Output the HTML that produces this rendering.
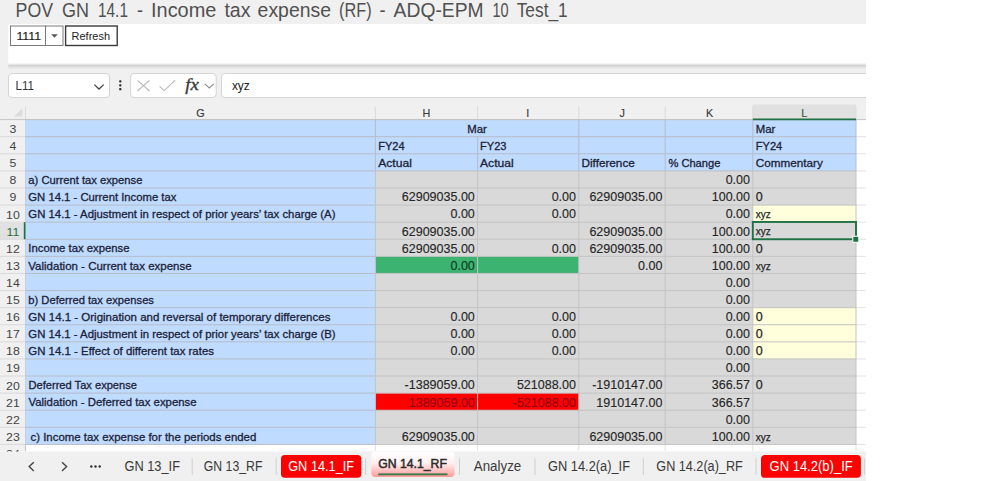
<!DOCTYPE html>
<html lang="en"><head><meta charset="utf-8"><title>POV GN 14.1 - Income tax expense (RF)</title>
<style>
html,body{margin:0;padding:0;background:#fff;overflow:hidden}
svg{display:block;font-family:"Liberation Sans",sans-serif}
text{white-space:pre}
</style></head><body>
<svg width="1000" height="481" viewBox="0 0 1000 481">
<rect x="0.00" y="0.00" width="1000.00" height="481.00" fill="#ffffff" />
<clipPath id="cl"><rect x="0" y="0" width="866" height="481"/></clipPath><g clip-path="url(#cl)">
<rect x="0.00" y="0.00" width="866.00" height="24.00" fill="#f0f0f0" />
<text x="15.60" y="16.80" font-size="19.3" fill="#505050" text-anchor="start" textLength="37.43" lengthAdjust="spacingAndGlyphs" >POV</text>
<text x="62.00" y="16.80" font-size="19.3" fill="#505050" text-anchor="start" textLength="27.00" lengthAdjust="spacingAndGlyphs" >GN</text>
<text x="98.00" y="16.80" font-size="19.3" fill="#505050" text-anchor="start" textLength="29.94" lengthAdjust="spacingAndGlyphs" >14.1</text>
<text x="137.00" y="16.80" font-size="19.3" fill="#505050" text-anchor="start" textLength="6.05" lengthAdjust="spacingAndGlyphs" >-</text>
<text x="151.00" y="16.80" font-size="19.3" fill="#505050" text-anchor="start" textLength="65.38" lengthAdjust="spacingAndGlyphs" >Income</text>
<text x="224.40" y="16.80" font-size="19.3" fill="#505050" text-anchor="start" textLength="26.08" lengthAdjust="spacingAndGlyphs" >tax</text>
<text x="257.60" y="16.80" font-size="19.3" fill="#505050" text-anchor="start" textLength="73.41" lengthAdjust="spacingAndGlyphs" >expense</text>
<text x="339.00" y="16.80" font-size="19.3" fill="#505050" text-anchor="start" textLength="32.58" lengthAdjust="spacingAndGlyphs" >(RF)</text>
<text x="379.60" y="16.80" font-size="19.3" fill="#505050" text-anchor="start" textLength="6.05" lengthAdjust="spacingAndGlyphs" >-</text>
<text x="393.60" y="16.80" font-size="19.3" fill="#505050" text-anchor="start" textLength="90.04" lengthAdjust="spacingAndGlyphs" >ADQ-EPM</text>
<text x="492.50" y="16.80" font-size="19.3" fill="#505050" text-anchor="start" textLength="16.13" lengthAdjust="spacingAndGlyphs" >10</text>
<text x="516.70" y="16.80" font-size="19.3" fill="#505050" text-anchor="start" textLength="51.03" lengthAdjust="spacingAndGlyphs" >Test_1</text>
<rect x="0.00" y="24.00" width="8.30" height="60.00" fill="#f0f0f0" />
<defs><linearGradient id="sh" x1="0" y1="0" x2="0" y2="1"><stop offset="0" stop-color="#ffffff"/><stop offset="0.22" stop-color="#eeeeee"/><stop offset="0.43" stop-color="#d2d2d2"/><stop offset="0.6" stop-color="#dedede"/><stop offset="0.8" stop-color="#e9e9e9"/><stop offset="1" stop-color="#f0f0f0"/></linearGradient><linearGradient id="act" x1="0" y1="0" x2="0" y2="1"><stop offset="0" stop-color="#ffffff"/><stop offset="0.45" stop-color="#fff0f0"/><stop offset="1" stop-color="#ff9a9a"/></linearGradient></defs>
<rect x="0.00" y="64.00" width="866.00" height="10.00" fill="#f0f0f0" />
<rect x="8.30" y="62.50" width="857.70" height="7.00" fill="url(#sh)" />
<rect x="0.00" y="73.00" width="866.00" height="26.00" fill="#f0f0f0" />
<rect x="8.5" y="73.5" width="101" height="24" rx="3.5" fill="#fff" stroke="#d4d4d4" stroke-width="1"/>
<text x="15.60" y="90.20" font-size="13.2" fill="#333" text-anchor="start" textLength="18.40" lengthAdjust="spacingAndGlyphs" >L11</text>
<path d="M94.3 84.6 L99 89 L103.7 84.6" fill="none" stroke="#444" stroke-width="1.3"/>
<rect x="119.2" y="80.20" width="2.2" height="2.2" rx="0.6" fill="#2e2e2e"/>
<rect x="119.2" y="84.20" width="2.2" height="2.2" rx="0.6" fill="#2e2e2e"/>
<rect x="119.2" y="88.10" width="2.2" height="2.2" rx="0.6" fill="#2e2e2e"/>
<rect x="130.6" y="73.5" width="85.6" height="24" rx="3.5" fill="#fff" stroke="#d4d4d4" stroke-width="1"/>
<path d="M137.5 80.3 L149.5 91 M149.5 80.3 L137.5 91" fill="none" stroke="#b8b8b8" stroke-width="1.1"/>
<path d="M159.6 86.3 L164.3 90.6 L175.2 80.2" fill="none" stroke="#b8b8b8" stroke-width="1.1"/>
<text x="185.20" y="89.60" font-size="16.5" fill="#3a3a3a" text-anchor="start" textLength="13.60" lengthAdjust="spacingAndGlyphs" font-family='"Liberation Serif", serif' font-style="italic" stroke="#3a3a3a" stroke-width="0.35">fx</text>
<path d="M204.8 83.9 L209.3 88 L213.8 83.9" fill="none" stroke="#8c8c8c" stroke-width="1.1"/>
<rect x="221.5" y="73.5" width="650.5" height="24" rx="3.5" fill="#fff" stroke="#d4d4d4" stroke-width="1"/>
<text x="231.90" y="90.00" font-size="13" fill="#222" text-anchor="start" textLength="17.90" lengthAdjust="spacingAndGlyphs" >xyz</text>
<rect x="0.00" y="98.00" width="866.00" height="21.60" fill="#f0f0f0" />
<rect x="752.80" y="104.40" width="103.20" height="15.20" fill="#e1e1e1" />
<line x1="375.40" y1="106.50" x2="375.40" y2="119.60" stroke="#dadada" stroke-width="1" />
<line x1="477.60" y1="106.50" x2="477.60" y2="119.60" stroke="#dadada" stroke-width="1" />
<line x1="578.80" y1="106.50" x2="578.80" y2="119.60" stroke="#dadada" stroke-width="1" />
<line x1="665.20" y1="106.50" x2="665.20" y2="119.60" stroke="#dadada" stroke-width="1" />
<line x1="752.80" y1="106.50" x2="752.80" y2="119.60" stroke="#dadada" stroke-width="1" />
<line x1="25.50" y1="106.50" x2="25.50" y2="119.60" stroke="#dadada" stroke-width="1" />
<line x1="856.00" y1="106.50" x2="856.00" y2="119.60" stroke="#dadada" stroke-width="1" />
<text x="200.50" y="116.70" font-size="10.8" fill="#3a3a3a" text-anchor="middle" stroke="#3a3a3a" stroke-width="0.15">G</text>
<text x="426.50" y="116.70" font-size="10.8" fill="#3a3a3a" text-anchor="middle" stroke="#3a3a3a" stroke-width="0.15">H</text>
<text x="527.80" y="116.70" font-size="10.8" fill="#3a3a3a" text-anchor="middle" stroke="#3a3a3a" stroke-width="0.15">I</text>
<text x="622.30" y="116.70" font-size="10.8" fill="#3a3a3a" text-anchor="middle" stroke="#3a3a3a" stroke-width="0.15">J</text>
<text x="709.50" y="116.70" font-size="10.8" fill="#3a3a3a" text-anchor="middle" stroke="#3a3a3a" stroke-width="0.15">K</text>
<text x="804.30" y="116.70" font-size="10.8" fill="#2c5a3c" text-anchor="middle" stroke="#2c5a3c" stroke-width="0.15">L</text>
<path d="M22.3 108.2 L22.3 116.5 L13.8 116.5 Z" fill="#dcdcdc"/>
<rect x="0.00" y="119.60" width="25.50" height="331.40" fill="#f0f0f0" />
<line x1="0.00" y1="136.69" x2="25.50" y2="136.69" stroke="#d9d9d9" stroke-width="1" />
<text x="12.90" y="133.09" font-size="11.2" fill="#444" text-anchor="middle" textLength="6.84" lengthAdjust="spacingAndGlyphs" >3</text>
<line x1="0.00" y1="153.79" x2="25.50" y2="153.79" stroke="#d9d9d9" stroke-width="1" />
<text x="12.90" y="150.19" font-size="11.2" fill="#444" text-anchor="middle" textLength="6.84" lengthAdjust="spacingAndGlyphs" >4</text>
<line x1="0.00" y1="170.88" x2="25.50" y2="170.88" stroke="#d9d9d9" stroke-width="1" />
<text x="12.90" y="167.28" font-size="11.2" fill="#444" text-anchor="middle" textLength="6.84" lengthAdjust="spacingAndGlyphs" >5</text>
<line x1="0.00" y1="187.98" x2="25.50" y2="187.98" stroke="#d9d9d9" stroke-width="1" />
<text x="12.90" y="184.38" font-size="11.2" fill="#444" text-anchor="middle" textLength="6.84" lengthAdjust="spacingAndGlyphs" >8</text>
<line x1="0.00" y1="205.07" x2="25.50" y2="205.07" stroke="#d9d9d9" stroke-width="1" />
<text x="12.90" y="201.47" font-size="11.2" fill="#444" text-anchor="middle" textLength="6.84" lengthAdjust="spacingAndGlyphs" >9</text>
<line x1="0.00" y1="222.17" x2="25.50" y2="222.17" stroke="#d9d9d9" stroke-width="1" />
<text x="12.90" y="218.57" font-size="11.2" fill="#444" text-anchor="middle" textLength="13.68" lengthAdjust="spacingAndGlyphs" >10</text>
<rect x="0.00" y="222.17" width="25.50" height="17.09" fill="#e1e1e1" />
<line x1="0.00" y1="239.26" x2="25.50" y2="239.26" stroke="#d9d9d9" stroke-width="1" />
<text x="12.90" y="235.66" font-size="11.2" fill="#1f6e43" text-anchor="middle" textLength="12.77" lengthAdjust="spacingAndGlyphs" >11</text>
<line x1="0.00" y1="256.36" x2="25.50" y2="256.36" stroke="#d9d9d9" stroke-width="1" />
<text x="12.90" y="252.76" font-size="11.2" fill="#444" text-anchor="middle" textLength="13.68" lengthAdjust="spacingAndGlyphs" >12</text>
<line x1="0.00" y1="273.46" x2="25.50" y2="273.46" stroke="#d9d9d9" stroke-width="1" />
<text x="12.90" y="269.86" font-size="11.2" fill="#444" text-anchor="middle" textLength="13.68" lengthAdjust="spacingAndGlyphs" >13</text>
<line x1="0.00" y1="290.55" x2="25.50" y2="290.55" stroke="#d9d9d9" stroke-width="1" />
<text x="12.90" y="286.95" font-size="11.2" fill="#444" text-anchor="middle" textLength="13.68" lengthAdjust="spacingAndGlyphs" >14</text>
<line x1="0.00" y1="307.64" x2="25.50" y2="307.64" stroke="#d9d9d9" stroke-width="1" />
<text x="12.90" y="304.04" font-size="11.2" fill="#444" text-anchor="middle" textLength="13.68" lengthAdjust="spacingAndGlyphs" >15</text>
<line x1="0.00" y1="324.74" x2="25.50" y2="324.74" stroke="#d9d9d9" stroke-width="1" />
<text x="12.90" y="321.14" font-size="11.2" fill="#444" text-anchor="middle" textLength="13.68" lengthAdjust="spacingAndGlyphs" >16</text>
<line x1="0.00" y1="341.84" x2="25.50" y2="341.84" stroke="#d9d9d9" stroke-width="1" />
<text x="12.90" y="338.24" font-size="11.2" fill="#444" text-anchor="middle" textLength="13.68" lengthAdjust="spacingAndGlyphs" >17</text>
<line x1="0.00" y1="358.93" x2="25.50" y2="358.93" stroke="#d9d9d9" stroke-width="1" />
<text x="12.90" y="355.33" font-size="11.2" fill="#444" text-anchor="middle" textLength="13.68" lengthAdjust="spacingAndGlyphs" >18</text>
<line x1="0.00" y1="376.02" x2="25.50" y2="376.02" stroke="#d9d9d9" stroke-width="1" />
<text x="12.90" y="372.42" font-size="11.2" fill="#444" text-anchor="middle" textLength="13.68" lengthAdjust="spacingAndGlyphs" >19</text>
<line x1="0.00" y1="393.12" x2="25.50" y2="393.12" stroke="#d9d9d9" stroke-width="1" />
<text x="12.90" y="389.52" font-size="11.2" fill="#444" text-anchor="middle" textLength="13.68" lengthAdjust="spacingAndGlyphs" >20</text>
<line x1="0.00" y1="410.22" x2="25.50" y2="410.22" stroke="#d9d9d9" stroke-width="1" />
<text x="12.90" y="406.62" font-size="11.2" fill="#444" text-anchor="middle" textLength="13.68" lengthAdjust="spacingAndGlyphs" >21</text>
<line x1="0.00" y1="427.31" x2="25.50" y2="427.31" stroke="#d9d9d9" stroke-width="1" />
<text x="12.90" y="423.71" font-size="11.2" fill="#444" text-anchor="middle" textLength="13.68" lengthAdjust="spacingAndGlyphs" >22</text>
<line x1="0.00" y1="444.40" x2="25.50" y2="444.40" stroke="#d9d9d9" stroke-width="1" />
<text x="12.90" y="440.80" font-size="11.2" fill="#444" text-anchor="middle" textLength="13.68" lengthAdjust="spacingAndGlyphs" >23</text>
<text x="12.90" y="457.90" font-size="11.2" fill="#444" text-anchor="middle" textLength="13.68" lengthAdjust="spacingAndGlyphs" >24</text>
<line x1="25.50" y1="119.60" x2="25.50" y2="451.00" stroke="#c4c4c4" stroke-width="1" />
<rect x="23.80" y="222.17" width="2.20" height="17.09" fill="#1f7145" />
<rect x="25.50" y="119.60" width="830.50" height="51.28" fill="#bfdbff" />
<rect x="25.50" y="119.60" width="349.90" height="324.80" fill="#bfdbff" />
<rect x="375.40" y="170.88" width="480.60" height="273.52" fill="#d9d9d9" />
<rect x="752.80" y="205.07" width="103.20" height="17.09" fill="#ffffdc" />
<rect x="752.80" y="307.64" width="103.20" height="17.09" fill="#ffffdc" />
<rect x="752.80" y="324.74" width="103.20" height="17.09" fill="#ffffdc" />
<rect x="752.80" y="341.83" width="103.20" height="17.09" fill="#ffffdc" />
<rect x="375.40" y="256.36" width="203.40" height="17.09" fill="#3cb371" />
<rect x="375.40" y="393.12" width="203.40" height="17.09" fill="#ff0000" />
<line x1="856.00" y1="119.60" x2="866.00" y2="119.60" stroke="#e2e2e2" stroke-width="1" />
<line x1="856.00" y1="136.69" x2="866.00" y2="136.69" stroke="#e2e2e2" stroke-width="1" />
<line x1="856.00" y1="153.79" x2="866.00" y2="153.79" stroke="#e2e2e2" stroke-width="1" />
<line x1="856.00" y1="170.88" x2="866.00" y2="170.88" stroke="#e2e2e2" stroke-width="1" />
<line x1="856.00" y1="187.98" x2="866.00" y2="187.98" stroke="#e2e2e2" stroke-width="1" />
<line x1="856.00" y1="205.07" x2="866.00" y2="205.07" stroke="#e2e2e2" stroke-width="1" />
<line x1="856.00" y1="222.17" x2="866.00" y2="222.17" stroke="#e2e2e2" stroke-width="1" />
<line x1="856.00" y1="239.26" x2="866.00" y2="239.26" stroke="#e2e2e2" stroke-width="1" />
<line x1="856.00" y1="256.36" x2="866.00" y2="256.36" stroke="#e2e2e2" stroke-width="1" />
<line x1="856.00" y1="273.45" x2="866.00" y2="273.45" stroke="#e2e2e2" stroke-width="1" />
<line x1="856.00" y1="290.55" x2="866.00" y2="290.55" stroke="#e2e2e2" stroke-width="1" />
<line x1="856.00" y1="307.64" x2="866.00" y2="307.64" stroke="#e2e2e2" stroke-width="1" />
<line x1="856.00" y1="324.74" x2="866.00" y2="324.74" stroke="#e2e2e2" stroke-width="1" />
<line x1="856.00" y1="341.83" x2="866.00" y2="341.83" stroke="#e2e2e2" stroke-width="1" />
<line x1="856.00" y1="358.93" x2="866.00" y2="358.93" stroke="#e2e2e2" stroke-width="1" />
<line x1="856.00" y1="376.02" x2="866.00" y2="376.02" stroke="#e2e2e2" stroke-width="1" />
<line x1="856.00" y1="393.12" x2="866.00" y2="393.12" stroke="#e2e2e2" stroke-width="1" />
<line x1="856.00" y1="410.22" x2="866.00" y2="410.22" stroke="#e2e2e2" stroke-width="1" />
<line x1="856.00" y1="427.31" x2="866.00" y2="427.31" stroke="#e2e2e2" stroke-width="1" />
<line x1="856.00" y1="444.40" x2="866.00" y2="444.40" stroke="#e2e2e2" stroke-width="1" />
<line x1="856.00" y1="461.50" x2="866.00" y2="461.50" stroke="#e2e2e2" stroke-width="1" />
<line x1="375.40" y1="444.40" x2="375.40" y2="451.00" stroke="#e2e2e2" stroke-width="1" />
<line x1="477.60" y1="444.40" x2="477.60" y2="451.00" stroke="#e2e2e2" stroke-width="1" />
<line x1="578.80" y1="444.40" x2="578.80" y2="451.00" stroke="#e2e2e2" stroke-width="1" />
<line x1="665.20" y1="444.40" x2="665.20" y2="451.00" stroke="#e2e2e2" stroke-width="1" />
<line x1="752.80" y1="444.40" x2="752.80" y2="451.00" stroke="#e2e2e2" stroke-width="1" />
<line x1="856.00" y1="444.40" x2="856.00" y2="451.00" stroke="#e2e2e2" stroke-width="1" />
<line x1="25.50" y1="119.60" x2="375.40" y2="119.60" stroke="#b7bcc7" stroke-width="1" />
<line x1="375.40" y1="119.60" x2="856.00" y2="119.60" stroke="#b7bcc7" stroke-width="1" />
<line x1="25.50" y1="136.69" x2="375.40" y2="136.69" stroke="#b7bcc7" stroke-width="1" />
<line x1="375.40" y1="136.69" x2="856.00" y2="136.69" stroke="#b7bcc7" stroke-width="1" />
<line x1="25.50" y1="153.79" x2="375.40" y2="153.79" stroke="#b7bcc7" stroke-width="1" />
<line x1="375.40" y1="153.79" x2="856.00" y2="153.79" stroke="#b7bcc7" stroke-width="1" />
<line x1="25.50" y1="170.88" x2="375.40" y2="170.88" stroke="#b7bcc7" stroke-width="1" />
<line x1="375.40" y1="170.88" x2="856.00" y2="170.88" stroke="#b7bcc7" stroke-width="1" />
<line x1="25.50" y1="187.98" x2="375.40" y2="187.98" stroke="#b7bcc7" stroke-width="1" />
<line x1="375.40" y1="187.98" x2="856.00" y2="187.98" stroke="#c3c3c3" stroke-width="1" />
<line x1="25.50" y1="205.07" x2="375.40" y2="205.07" stroke="#b7bcc7" stroke-width="1" />
<line x1="375.40" y1="205.07" x2="856.00" y2="205.07" stroke="#c3c3c3" stroke-width="1" />
<line x1="25.50" y1="222.17" x2="375.40" y2="222.17" stroke="#b7bcc7" stroke-width="1" />
<line x1="375.40" y1="222.17" x2="856.00" y2="222.17" stroke="#c3c3c3" stroke-width="1" />
<line x1="25.50" y1="239.26" x2="375.40" y2="239.26" stroke="#b7bcc7" stroke-width="1" />
<line x1="375.40" y1="239.26" x2="856.00" y2="239.26" stroke="#c3c3c3" stroke-width="1" />
<line x1="25.50" y1="256.36" x2="375.40" y2="256.36" stroke="#b7bcc7" stroke-width="1" />
<line x1="375.40" y1="256.36" x2="856.00" y2="256.36" stroke="#c3c3c3" stroke-width="1" />
<line x1="25.50" y1="273.45" x2="375.40" y2="273.45" stroke="#b7bcc7" stroke-width="1" />
<line x1="375.40" y1="273.45" x2="856.00" y2="273.45" stroke="#c3c3c3" stroke-width="1" />
<line x1="25.50" y1="290.55" x2="375.40" y2="290.55" stroke="#b7bcc7" stroke-width="1" />
<line x1="375.40" y1="290.55" x2="856.00" y2="290.55" stroke="#c3c3c3" stroke-width="1" />
<line x1="25.50" y1="307.64" x2="375.40" y2="307.64" stroke="#b7bcc7" stroke-width="1" />
<line x1="375.40" y1="307.64" x2="856.00" y2="307.64" stroke="#c3c3c3" stroke-width="1" />
<line x1="25.50" y1="324.74" x2="375.40" y2="324.74" stroke="#b7bcc7" stroke-width="1" />
<line x1="375.40" y1="324.74" x2="856.00" y2="324.74" stroke="#c3c3c3" stroke-width="1" />
<line x1="25.50" y1="341.83" x2="375.40" y2="341.83" stroke="#b7bcc7" stroke-width="1" />
<line x1="375.40" y1="341.83" x2="856.00" y2="341.83" stroke="#c3c3c3" stroke-width="1" />
<line x1="25.50" y1="358.93" x2="375.40" y2="358.93" stroke="#b7bcc7" stroke-width="1" />
<line x1="375.40" y1="358.93" x2="856.00" y2="358.93" stroke="#c3c3c3" stroke-width="1" />
<line x1="25.50" y1="376.02" x2="375.40" y2="376.02" stroke="#b7bcc7" stroke-width="1" />
<line x1="375.40" y1="376.02" x2="856.00" y2="376.02" stroke="#c3c3c3" stroke-width="1" />
<line x1="25.50" y1="393.12" x2="375.40" y2="393.12" stroke="#b7bcc7" stroke-width="1" />
<line x1="375.40" y1="393.12" x2="856.00" y2="393.12" stroke="#c3c3c3" stroke-width="1" />
<line x1="25.50" y1="410.22" x2="375.40" y2="410.22" stroke="#b7bcc7" stroke-width="1" />
<line x1="375.40" y1="410.22" x2="856.00" y2="410.22" stroke="#c3c3c3" stroke-width="1" />
<line x1="25.50" y1="427.31" x2="375.40" y2="427.31" stroke="#b7bcc7" stroke-width="1" />
<line x1="375.40" y1="427.31" x2="856.00" y2="427.31" stroke="#c3c3c3" stroke-width="1" />
<line x1="25.50" y1="444.40" x2="375.40" y2="444.40" stroke="#b7bcc7" stroke-width="1" />
<line x1="375.40" y1="444.40" x2="856.00" y2="444.40" stroke="#c3c3c3" stroke-width="1" />
<line x1="375.40" y1="119.60" x2="375.40" y2="136.69" stroke="#b7bcc7" stroke-width="1" />
<line x1="375.40" y1="136.69" x2="375.40" y2="170.88" stroke="#b7bcc7" stroke-width="1" />
<line x1="375.40" y1="170.88" x2="375.40" y2="444.40" stroke="#c3c3c3" stroke-width="1" />
<line x1="477.60" y1="136.69" x2="477.60" y2="170.88" stroke="#b7bcc7" stroke-width="1" />
<line x1="477.60" y1="170.88" x2="477.60" y2="444.40" stroke="#c3c3c3" stroke-width="1" />
<line x1="578.80" y1="119.60" x2="578.80" y2="136.69" stroke="#b7bcc7" stroke-width="1" />
<line x1="578.80" y1="136.69" x2="578.80" y2="170.88" stroke="#b7bcc7" stroke-width="1" />
<line x1="578.80" y1="170.88" x2="578.80" y2="444.40" stroke="#c3c3c3" stroke-width="1" />
<line x1="665.20" y1="119.60" x2="665.20" y2="136.69" stroke="#b7bcc7" stroke-width="1" />
<line x1="665.20" y1="136.69" x2="665.20" y2="170.88" stroke="#b7bcc7" stroke-width="1" />
<line x1="665.20" y1="170.88" x2="665.20" y2="444.40" stroke="#c3c3c3" stroke-width="1" />
<line x1="752.80" y1="119.60" x2="752.80" y2="136.69" stroke="#b7bcc7" stroke-width="1" />
<line x1="752.80" y1="136.69" x2="752.80" y2="170.88" stroke="#b7bcc7" stroke-width="1" />
<line x1="752.80" y1="170.88" x2="752.80" y2="444.40" stroke="#c3c3c3" stroke-width="1" />
<line x1="856.00" y1="119.60" x2="856.00" y2="136.69" stroke="#b7bcc7" stroke-width="1" />
<line x1="856.00" y1="136.69" x2="856.00" y2="170.88" stroke="#b7bcc7" stroke-width="1" />
<line x1="856.00" y1="170.88" x2="856.00" y2="444.40" stroke="#c3c3c3" stroke-width="1" />
<line x1="0.00" y1="119.60" x2="866.00" y2="119.60" stroke="#c4c4c4" stroke-width="1" />
<line x1="752.80" y1="119.30" x2="856.00" y2="119.30" stroke="#1f7145" stroke-width="1.8" />
<text x="28.30" y="184.08" font-size="11.6" fill="#1b2237" text-anchor="start" textLength="114.11" lengthAdjust="spacingAndGlyphs" stroke="#1b2237" stroke-width="0.3">a) Current tax expense</text>
<text x="28.30" y="201.17" font-size="11.6" fill="#1b2237" text-anchor="start" textLength="148.15" lengthAdjust="spacingAndGlyphs" stroke="#1b2237" stroke-width="0.3">GN 14.1 - Current Income tax</text>
<text x="28.30" y="218.27" font-size="11.6" fill="#1b2237" text-anchor="start" textLength="307.18" lengthAdjust="spacingAndGlyphs" stroke="#1b2237" stroke-width="0.3">GN 14.1 - Adjustment in respect of prior years’ tax charge (A)</text>
<text x="28.30" y="252.46" font-size="11.6" fill="#1b2237" text-anchor="start" textLength="101.19" lengthAdjust="spacingAndGlyphs" stroke="#1b2237" stroke-width="0.3">Income tax expense</text>
<text x="28.30" y="269.56" font-size="11.6" fill="#1b2237" text-anchor="start" textLength="163.31" lengthAdjust="spacingAndGlyphs" stroke="#1b2237" stroke-width="0.3">Validation - Current tax expense</text>
<text x="28.30" y="303.75" font-size="11.6" fill="#1b2237" text-anchor="start" textLength="125.67" lengthAdjust="spacingAndGlyphs" stroke="#1b2237" stroke-width="0.3">b) Deferred tax expenses</text>
<text x="28.30" y="320.84" font-size="11.6" fill="#1b2237" text-anchor="start" textLength="302.10" lengthAdjust="spacingAndGlyphs" stroke="#1b2237" stroke-width="0.3">GN 14.1 - Origination and reversal of temporary differences</text>
<text x="28.30" y="337.94" font-size="11.6" fill="#1b2237" text-anchor="start" textLength="307.28" lengthAdjust="spacingAndGlyphs" stroke="#1b2237" stroke-width="0.3">GN 14.1 - Adjustment in respect of prior years’ tax charge (B)</text>
<text x="28.30" y="355.03" font-size="11.6" fill="#1b2237" text-anchor="start" textLength="185.68" lengthAdjust="spacingAndGlyphs" stroke="#1b2237" stroke-width="0.3">GN 14.1 - Effect of different tax rates</text>
<text x="28.50" y="389.22" font-size="11.6" fill="#1b2237" text-anchor="start" textLength="108.45" lengthAdjust="spacingAndGlyphs" stroke="#1b2237" stroke-width="0.3">Deferred Tax expense</text>
<text x="28.40" y="406.32" font-size="11.6" fill="#1b2237" text-anchor="start" textLength="168.26" lengthAdjust="spacingAndGlyphs" stroke="#1b2237" stroke-width="0.3">Validation - Deferred tax expense</text>
<text x="30.50" y="440.50" font-size="11.6" fill="#1b2237" text-anchor="start" textLength="225.78" lengthAdjust="spacingAndGlyphs" stroke="#1b2237" stroke-width="0.3">c) Income tax expense for the periods ended</text>
<text x="477.10" y="132.79" font-size="11.6" fill="#1b2237" text-anchor="middle" textLength="19.58" lengthAdjust="spacingAndGlyphs" stroke="#1b2237" stroke-width="0.3">Mar</text>
<text x="378.20" y="149.89" font-size="11.6" fill="#1b2237" text-anchor="start" textLength="26.50" lengthAdjust="spacingAndGlyphs" stroke="#1b2237" stroke-width="0.3">FY24</text>
<text x="378.20" y="166.98" font-size="11.6" fill="#1b2237" text-anchor="start" textLength="33.70" lengthAdjust="spacingAndGlyphs" stroke="#1b2237" stroke-width="0.3">Actual</text>
<text x="480.00" y="149.89" font-size="11.6" fill="#1b2237" text-anchor="start" textLength="26.50" lengthAdjust="spacingAndGlyphs" stroke="#1b2237" stroke-width="0.3">FY23</text>
<text x="480.00" y="166.98" font-size="11.6" fill="#1b2237" text-anchor="start" textLength="33.70" lengthAdjust="spacingAndGlyphs" stroke="#1b2237" stroke-width="0.3">Actual</text>
<text x="581.50" y="166.98" font-size="11.6" fill="#1b2237" text-anchor="start" textLength="53.30" lengthAdjust="spacingAndGlyphs" stroke="#1b2237" stroke-width="0.3">Difference</text>
<text x="668.40" y="166.98" font-size="11.6" fill="#1b2237" text-anchor="start" textLength="52.00" lengthAdjust="spacingAndGlyphs" stroke="#1b2237" stroke-width="0.3">% Change</text>
<text x="755.80" y="132.79" font-size="11.6" fill="#1b2237" text-anchor="start" textLength="19.58" lengthAdjust="spacingAndGlyphs" stroke="#1b2237" stroke-width="0.3">Mar</text>
<text x="755.80" y="149.89" font-size="11.6" fill="#1b2237" text-anchor="start" textLength="26.50" lengthAdjust="spacingAndGlyphs" stroke="#1b2237" stroke-width="0.3">FY24</text>
<text x="755.80" y="166.98" font-size="11.6" fill="#1b2237" text-anchor="start" textLength="67.00" lengthAdjust="spacingAndGlyphs" stroke="#1b2237" stroke-width="0.3">Commentary</text>
<text x="474.80" y="201.37" font-size="12.5" fill="#262626" text-anchor="end" stroke="#262626" stroke-width="0.12">62909035.00</text>
<text x="474.80" y="218.47" font-size="12.5" fill="#262626" text-anchor="end" stroke="#262626" stroke-width="0.12">0.00</text>
<text x="474.80" y="235.56" font-size="12.5" fill="#262626" text-anchor="end" stroke="#262626" stroke-width="0.12">62909035.00</text>
<text x="474.80" y="252.66" font-size="12.5" fill="#262626" text-anchor="end" stroke="#262626" stroke-width="0.12">62909035.00</text>
<text x="474.80" y="269.76" font-size="12.5" fill="#0d3b22" text-anchor="end" stroke="#0d3b22" stroke-width="0.12">0.00</text>
<text x="474.80" y="321.04" font-size="12.5" fill="#262626" text-anchor="end" stroke="#262626" stroke-width="0.12">0.00</text>
<text x="474.80" y="338.14" font-size="12.5" fill="#262626" text-anchor="end" stroke="#262626" stroke-width="0.12">0.00</text>
<text x="474.80" y="355.23" font-size="12.5" fill="#262626" text-anchor="end" stroke="#262626" stroke-width="0.12">0.00</text>
<text x="474.80" y="389.42" font-size="12.5" fill="#262626" text-anchor="end" stroke="#262626" stroke-width="0.12">-1389059.00</text>
<text x="474.80" y="406.52" font-size="12.5" fill="#8e0012" text-anchor="end" stroke="#8e0012" stroke-width="0.12">1389059.00</text>
<text x="474.80" y="440.70" font-size="12.5" fill="#262626" text-anchor="end" stroke="#262626" stroke-width="0.12">62909035.00</text>
<text x="576.00" y="201.37" font-size="12.5" fill="#262626" text-anchor="end" stroke="#262626" stroke-width="0.12">0.00</text>
<text x="576.00" y="218.47" font-size="12.5" fill="#262626" text-anchor="end" stroke="#262626" stroke-width="0.12">0.00</text>
<text x="576.00" y="252.66" font-size="12.5" fill="#262626" text-anchor="end" stroke="#262626" stroke-width="0.12">0.00</text>
<text x="576.00" y="321.04" font-size="12.5" fill="#262626" text-anchor="end" stroke="#262626" stroke-width="0.12">0.00</text>
<text x="576.00" y="338.14" font-size="12.5" fill="#262626" text-anchor="end" stroke="#262626" stroke-width="0.12">0.00</text>
<text x="576.00" y="355.23" font-size="12.5" fill="#262626" text-anchor="end" stroke="#262626" stroke-width="0.12">0.00</text>
<text x="576.00" y="389.42" font-size="12.5" fill="#262626" text-anchor="end" stroke="#262626" stroke-width="0.12">521088.00</text>
<text x="576.00" y="406.52" font-size="12.5" fill="#8e0012" text-anchor="end" stroke="#8e0012" stroke-width="0.12">-521088.00</text>
<text x="662.40" y="201.37" font-size="12.5" fill="#262626" text-anchor="end" stroke="#262626" stroke-width="0.12">62909035.00</text>
<text x="662.40" y="235.56" font-size="12.5" fill="#262626" text-anchor="end" stroke="#262626" stroke-width="0.12">62909035.00</text>
<text x="662.40" y="252.66" font-size="12.5" fill="#262626" text-anchor="end" stroke="#262626" stroke-width="0.12">62909035.00</text>
<text x="662.40" y="269.76" font-size="12.5" fill="#262626" text-anchor="end" stroke="#262626" stroke-width="0.12">0.00</text>
<text x="662.40" y="389.42" font-size="12.5" fill="#262626" text-anchor="end" stroke="#262626" stroke-width="0.12">-1910147.00</text>
<text x="662.40" y="406.52" font-size="12.5" fill="#262626" text-anchor="end" stroke="#262626" stroke-width="0.12">1910147.00</text>
<text x="662.40" y="440.70" font-size="12.5" fill="#262626" text-anchor="end" stroke="#262626" stroke-width="0.12">62909035.00</text>
<text x="750.00" y="184.28" font-size="12.5" fill="#262626" text-anchor="end" stroke="#262626" stroke-width="0.12">0.00</text>
<text x="750.00" y="201.37" font-size="12.5" fill="#262626" text-anchor="end" stroke="#262626" stroke-width="0.12">100.00</text>
<text x="750.00" y="218.47" font-size="12.5" fill="#262626" text-anchor="end" stroke="#262626" stroke-width="0.12">0.00</text>
<text x="750.00" y="235.56" font-size="12.5" fill="#262626" text-anchor="end" stroke="#262626" stroke-width="0.12">100.00</text>
<text x="750.00" y="252.66" font-size="12.5" fill="#262626" text-anchor="end" stroke="#262626" stroke-width="0.12">100.00</text>
<text x="750.00" y="269.76" font-size="12.5" fill="#262626" text-anchor="end" stroke="#262626" stroke-width="0.12">100.00</text>
<text x="750.00" y="286.85" font-size="12.5" fill="#262626" text-anchor="end" stroke="#262626" stroke-width="0.12">0.00</text>
<text x="750.00" y="303.94" font-size="12.5" fill="#262626" text-anchor="end" stroke="#262626" stroke-width="0.12">0.00</text>
<text x="750.00" y="321.04" font-size="12.5" fill="#262626" text-anchor="end" stroke="#262626" stroke-width="0.12">0.00</text>
<text x="750.00" y="338.14" font-size="12.5" fill="#262626" text-anchor="end" stroke="#262626" stroke-width="0.12">0.00</text>
<text x="750.00" y="355.23" font-size="12.5" fill="#262626" text-anchor="end" stroke="#262626" stroke-width="0.12">0.00</text>
<text x="750.00" y="372.32" font-size="12.5" fill="#262626" text-anchor="end" stroke="#262626" stroke-width="0.12">0.00</text>
<text x="750.00" y="389.42" font-size="12.5" fill="#262626" text-anchor="end" stroke="#262626" stroke-width="0.12">366.57</text>
<text x="750.00" y="406.52" font-size="12.5" fill="#262626" text-anchor="end" stroke="#262626" stroke-width="0.12">366.57</text>
<text x="750.00" y="423.61" font-size="12.5" fill="#262626" text-anchor="end" stroke="#262626" stroke-width="0.12">0.00</text>
<text x="750.00" y="440.70" font-size="12.5" fill="#262626" text-anchor="end" stroke="#262626" stroke-width="0.12">100.00</text>
<text x="755.80" y="201.37" font-size="12.5" fill="#262626" text-anchor="start" stroke="#262626" stroke-width="0.25">0</text>
<text x="755.80" y="218.27" font-size="10.2" fill="#262626" text-anchor="start" textLength="15.00" lengthAdjust="spacingAndGlyphs" stroke="#262626" stroke-width="0.25">xyz</text>
<text x="755.80" y="235.36" font-size="10.2" fill="#262626" text-anchor="start" textLength="15.00" lengthAdjust="spacingAndGlyphs" stroke="#262626" stroke-width="0.25">xyz</text>
<text x="755.80" y="252.66" font-size="12.5" fill="#262626" text-anchor="start" stroke="#262626" stroke-width="0.25">0</text>
<text x="755.80" y="269.56" font-size="10.2" fill="#262626" text-anchor="start" textLength="15.00" lengthAdjust="spacingAndGlyphs" stroke="#262626" stroke-width="0.25">xyz</text>
<text x="755.80" y="321.04" font-size="12.5" fill="#262626" text-anchor="start" stroke="#262626" stroke-width="0.25">0</text>
<text x="755.80" y="338.14" font-size="12.5" fill="#262626" text-anchor="start" stroke="#262626" stroke-width="0.25">0</text>
<text x="755.80" y="355.23" font-size="12.5" fill="#262626" text-anchor="start" stroke="#262626" stroke-width="0.25">0</text>
<text x="755.80" y="389.42" font-size="12.5" fill="#262626" text-anchor="start" stroke="#262626" stroke-width="0.25">0</text>
<text x="755.80" y="440.50" font-size="10.2" fill="#262626" text-anchor="start" textLength="15.00" lengthAdjust="spacingAndGlyphs" stroke="#262626" stroke-width="0.25">xyz</text>
<rect x="752.80" y="221.97" width="103.20" height="17.29" fill="none" stroke="#1f7145" stroke-width="1.9"/>
<rect x="852.80" y="236.26" width="6" height="6" fill="#1f7145" stroke="#fff" stroke-width="1"/>
<rect x="10.5" y="26" width="35" height="19.5" fill="#fff" stroke="#7a7a7a" stroke-width="1"/>
<rect x="45.5" y="26" width="17.5" height="19.5" fill="#fff" stroke="#7a7a7a" stroke-width="1"/>
<text x="16.40" y="39.60" font-size="10.8" fill="#222" text-anchor="start" textLength="24.60" lengthAdjust="spacingAndGlyphs" stroke="#222" stroke-width="0.15">1111</text>
<path d="M51.2 34.2 L57.8 34.2 L54.5 37.8 Z" fill="#555"/>
<rect x="65.6" y="26" width="51.6" height="19.5" fill="#fff" stroke="#3a3a3a" stroke-width="1.4"/>
<text x="71.60" y="39.80" font-size="11.6" fill="#222" text-anchor="start" textLength="38.40" lengthAdjust="spacingAndGlyphs" >Refresh</text>
<rect x="0.00" y="451.50" width="866.00" height="30.00" fill="#f0f0f0" />
<path d="M33.8 462.3 L29.2 466.6 L33.8 470.9" fill="none" stroke="#444" stroke-width="1.4"/>
<path d="M62 462.3 L66.6 466.6 L62 470.9" fill="none" stroke="#444" stroke-width="1.4"/>
<circle cx="91.3" cy="466.5" r="1.2" fill="#333"/>
<circle cx="95.5" cy="466.5" r="1.2" fill="#333"/>
<circle cx="99.7" cy="466.5" r="1.2" fill="#333"/>
<text x="124.50" y="471.40" font-size="13.8" fill="#3a3a3a" text-anchor="start" textLength="55.46" lengthAdjust="spacingAndGlyphs" >GN 13_IF</text>
<line x1="192.20" y1="458.30" x2="192.20" y2="475.00" stroke="#cfcfcf" stroke-width="1" />
<text x="203.80" y="471.40" font-size="13.8" fill="#3a3a3a" text-anchor="start" textLength="58.69" lengthAdjust="spacingAndGlyphs" >GN 13_RF</text>
<line x1="276.20" y1="458.30" x2="276.20" y2="475.00" stroke="#cfcfcf" stroke-width="1" />
<rect x="281" y="455.1" width="80.3" height="22.7" rx="3.8" fill="#ff0000"/>
<text x="288.20" y="471.40" font-size="13.8" fill="#ffffff" text-anchor="start" textLength="65.98" lengthAdjust="spacingAndGlyphs" >GN 14.1_IF</text>
<line x1="365.70" y1="458.30" x2="365.70" y2="475.00" stroke="#cfcfcf" stroke-width="1" />
<rect x="371.3" y="451.8" width="83.3" height="25.1" rx="4" fill="url(#act)"/>
<text x="378.20" y="468.30" font-size="13.1" fill="#2a2a2a" text-anchor="start" textLength="68.74" lengthAdjust="spacingAndGlyphs" stroke="#2a2a2a" stroke-width="0.5">GN 14.1_RF</text>
<rect x="378.20" y="473.40" width="69.30" height="1.90" fill="#3b7a4a" />
<line x1="459.50" y1="458.30" x2="459.50" y2="475.00" stroke="#cfcfcf" stroke-width="1" />
<text x="473.80" y="471.40" font-size="13.8" fill="#3a3a3a" text-anchor="start" textLength="47.47" lengthAdjust="spacingAndGlyphs" >Analyze</text>
<line x1="535.00" y1="458.30" x2="535.00" y2="475.00" stroke="#cfcfcf" stroke-width="1" />
<text x="548.00" y="471.40" font-size="13.8" fill="#3a3a3a" text-anchor="start" textLength="82.01" lengthAdjust="spacingAndGlyphs" >GN 14.2(a)_IF</text>
<line x1="643.30" y1="458.30" x2="643.30" y2="475.00" stroke="#cfcfcf" stroke-width="1" />
<text x="656.30" y="471.40" font-size="13.8" fill="#3a3a3a" text-anchor="start" textLength="86.44" lengthAdjust="spacingAndGlyphs" >GN 14.2(a)_RF</text>
<line x1="756.00" y1="458.30" x2="756.00" y2="475.00" stroke="#cfcfcf" stroke-width="1" />
<rect x="761" y="455.1" width="99.9" height="22.7" rx="3.8" fill="#ff0000"/>
<text x="769.50" y="471.40" font-size="13.8" fill="#ffffff" text-anchor="start" textLength="83.21" lengthAdjust="spacingAndGlyphs" >GN 14.2(b)_IF</text>
<line x1="864.30" y1="458.30" x2="864.30" y2="475.00" stroke="#cfcfcf" stroke-width="1" />
</g>
</svg>
</body></html>
